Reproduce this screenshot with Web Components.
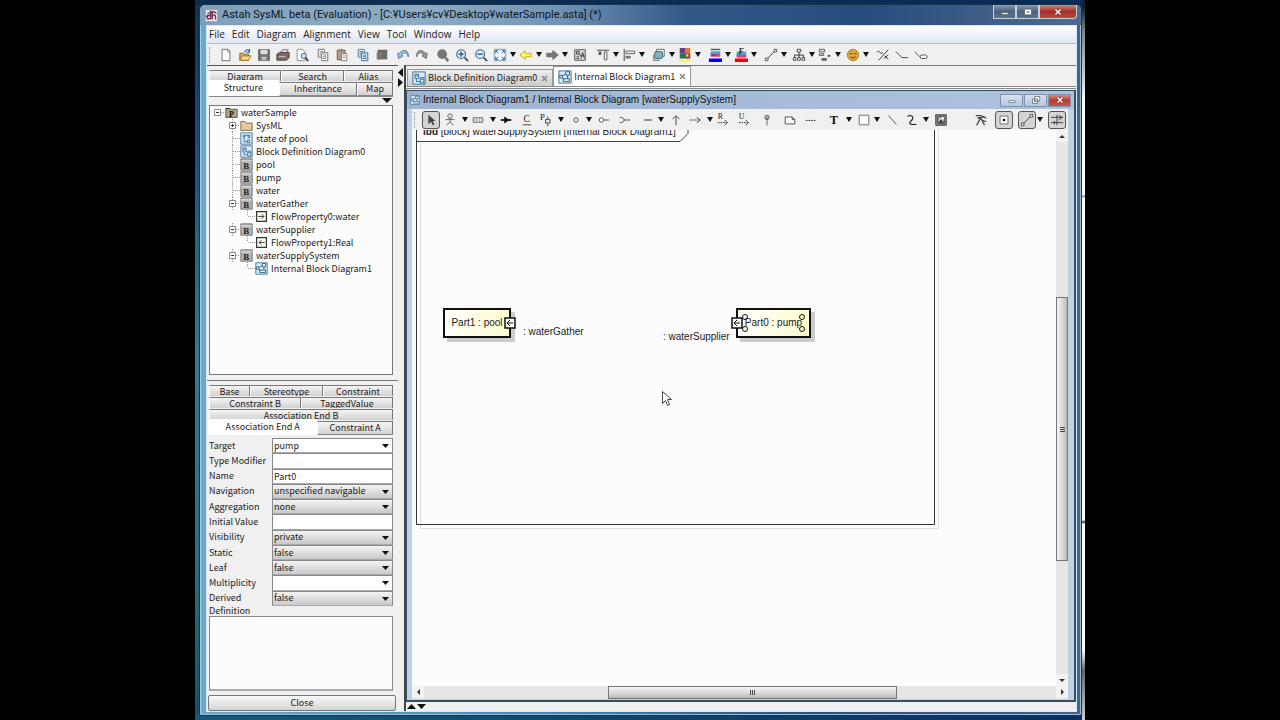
<!DOCTYPE html>
<html lang="en">
<head>
<meta charset="utf-8">
<title>Astah SysML beta</title>
<style>
  html, body {
    margin: 0;
    height: 100%;
    background: #000;
  }
  body {
    font: 9px/12px "Noto Sans CJK JP", sans-serif;
    color: #222;
  }
</style>
</head>
<body>
<astah-app></astah-app>

<script>
const ICONS = {
  logo: `<rect x="1" y="1" width="14" height="14" fill="#efe6ee"/><path d="M3 5h4v7M7 8H3v4h4M9 2v11M9 8c4-2 4 0 4 5M1 9h3M10 3l4 2M6 2l2 3" stroke="#6a2c50" stroke-width="1.6" fill="none"/>`,
  new: `<path d="M3.500 1.500h7l2 2v11h-9z" fill="#fff" stroke="#666"/><path d="M10 2v2.500h2.500" fill="none" stroke="#777"/>`,
  open: `<path d="M2 14V6h4l1 1h5v7z" fill="#d9a94a" stroke="#8a6420"/><path d="M2 14l3-5h10l-3 5z" fill="#f6d789" stroke="#94702a"/><path d="M8 5c0-3 4-4 5-1M13 1v4h-3" stroke="#3577a9" stroke-width="1.500" fill="none"/>`,
  save: `<path d="M2 2h12v12H2z" fill="#777" stroke="#444"/><path d="M4 2h8v5H4z" fill="#ddd"/><path d="M5 10h6v4H5z" fill="#bbb"/>`,
  print: `<path d="M5 6l2-4h7l-2 4z" fill="#eee" stroke="#666"/><path d="M1 7l3-2h11v6l-3 3H1z" fill="#7a6b60" stroke="#463c36"/><path d="M3 10h8" stroke="#ddd"/>`,
  preview: `<path d="M2.500 1.500h6l3 3v10h-9z" fill="#fff" stroke="#888"/><circle cx="10" cy="9" r="3" fill="#cfe1ee" stroke="#456"/><path d="M12 11l3 4" stroke="#345" stroke-width="2"/>`,
  copy: `<path d="M2.500 1.500h7v9h-7z" fill="#fff" stroke="#666"/><path d="M4 4h4M4 6h4M4 8h2" stroke="#888"/><path d="M6.500 5.500h7v9h-7z" fill="#fff" stroke="#666"/><path d="M8 8h4M8 10h4M8 12h4" stroke="#777"/>`,
  paste: `<path d="M2.500 2.500h9v11h-9z" fill="#b69b83" stroke="#6d5948"/><path d="M5 1h4v3H5z" fill="#888"/><path d="M7.500 6.500h6v8h-6z" fill="#fff" stroke="#777"/><path d="M9 9h3M9 11h3" stroke="#888"/>`,
  copyImage: `<path d="M2.500 1.500h7v9h-7z" fill="#dcebf8" stroke="#4c7597"/><path d="M4 4h4M4 6h4M4 8h2" stroke="#4c7597"/><path d="M6.500 5.500h7v9h-7z" fill="#e8f3fc" stroke="#33648d"/><path d="M8 8h4M8 10h4M8 12h4" stroke="#33648d"/>`,
  locked: `<path d="M3 2h11v11H3z" fill="#6b6b6b"/><path d="M2 5h6v8H2z" fill="#777"/>`,
  undo: `<path d="M2 6l1 6 5-3-2-1c3-4 7-3 8 2 1-7-5-10-10-4z" fill="#a9cbe1" stroke="#386789"/>`,
  redo: `<path d="M14 6l-1 6-5-3 2-1C7 4 3 5 2 10 1 3 7 0 12 6z" fill="#999" stroke="#666"/>`,
  find: `<circle cx="7" cy="7" r="5.500" fill="#777"/><path d="M10 10l4 5" stroke="#777" stroke-width="3"/>`,
  zoomIn: `<circle cx="7" cy="7" r="5" fill="#d8edfa" stroke="#3d6287" stroke-width="1.300"/><path d="M4 7h6M7 4v6" stroke="#234f7d" stroke-width="1.500"/><path d="M11 11l4 4" stroke="#3b4f66" stroke-width="2"/>`,
  zoomOut: `<circle cx="7" cy="7" r="5" fill="#d8edfa" stroke="#3d6287" stroke-width="1.300"/><path d="M4 7h6" stroke="#234f7d" stroke-width="1.500"/><path d="M11 11l4 4" stroke="#3b4f66" stroke-width="2"/>`,
  fit: `<path d="M1.500 1.500h13v13h-13z" fill="#eef7fd" stroke="#6a93b5"/><path d="M3 6V3h3M10 3h3v3M13 10v3h-3M6 13H3v-3M3 3l3 3M13 3l-3 3M3 13l3-3M13 13l-3-3" stroke="#2f6190" fill="none"/>`,
  back: `<path d="M1 8l6-5v3h7v4H7v3z" fill="#fff46b" stroke="#c5a800"/>`,
  forward: `<path d="M15 8L9 3v3H2v4h7v3z" fill="#777" stroke="#666"/>`,
  hierarchy: `<path d="M2 2h12v12H2z" fill="#ddd" stroke="#444"/><path d="M4 4h3v3H4zM4 10h3M4 12h3M9 12l2-7 2 7M9 9h4M7 8h2" stroke="#333" fill="none"/>`,
  alignTop: `<path d="M1 2.500h14" stroke="#333"/><path d="M4.500 4v4" stroke="#555" stroke-width="3"/><path d="M9.500 4.500h3v9h-3z" fill="#eee" stroke="#555"/>`,
  alignLeft: `<path d="M2.500 1v14" stroke="#333"/><path d="M4.500 3.500h10v3h-10z" fill="#eee" stroke="#555"/><path d="M4 10.500h6" stroke="#777" stroke-width="3"/>`,
  depth: `<path d="M5 1.500h9v8H5z" fill="#eef" stroke="#666"/><rect x="3" y="4" width="9" height="8" rx="2" fill="#7dafbf" stroke="#386576"/><path d="M2 8v6h7" stroke="#555" fill="none"/>`,
  palette: `<path d="M2 0h6v6H2z" fill="#69407c"/><path d="M8 0h6v6H8z" fill="#da7b3b"/><path d="M2 6h6v6H2z" fill="#29735b"/><path d="M8 6h6v6H8z" fill="#892e57"/><path d="M9 7h3v3H9z" fill="#e4ce54"/><path d="M1 13h14v3H1z" fill="#ffee6a"/>`,
  lineColor: `<path d="M3 1.500h11" stroke="#222"/><path d="M3 3h11v3H3z" fill="#55d8b0"/><path d="M3 5h11v3H3z" fill="#6388e9"/><path d="M3 7h11v3H3z" fill="#e33e79"/><path d="M4 7h5v2H4z" fill="#8a35b2"/><path d="M1 12h15v4H1z" fill="#00f"/>`,
  fontColor: `<path d="M3 4h11v3H3z" fill="#4cc595"/><path d="M3 6h11v3H3z" fill="#6388e9"/><path d="M3 8h11v3H3z" fill="#e33e79"/><text x="5" y="7" font-family="Liberation Serif" font-style="italic" font-weight="bold" font-size="9" fill="#111">F</text><path d="M1 12h15v4H1z" fill="#f00"/>`,
  link: `<path d="M4 12l8-8" stroke="#333"/><path d="M1.500 11.500h3v3h-3zM11.500 1.500h3v3h-3z" fill="#fff" stroke="#444"/>`,
  tree: `<path d="M8 5v3M3 11V8h10v3M8 8v3" stroke="#222" fill="none"/><path d="M6 1.500h4v3H6zM1.500 11h3v3h-3zM6.500 11h3v3h-3zM11.500 11h3v3h-3z" fill="#fff" stroke="#333"/>`,
  distribute: `<path d="M1.500 1.500h6v3h-6zM1.500 6.500h5v2h-5z" fill="#ddd" stroke="#555"/><path d="M4.500 12h5v2h-5z" fill="#777" stroke="#555"/><path d="M11 8h3v2h-3z" fill="#444"/>`,
  smile: `<circle cx="8" cy="8" r="6.500" fill="#e0a73c" stroke="#aa7620"/><path d="M4 7q1.500-2 3 0M9 7q1.500-2 3 0M5 10q3 3 6 0" fill="none" stroke="#563612"/>`,
  percent: `<path d="M3 14L14 2M1 5c3-4 4 4 7 0M10 9l4 4M14 8l-5 4" stroke="#222" fill="none"/>`,
  elbow: `<path d="M1 4l7 7h7" stroke="#333" fill="none"/>`,
  elbowBox: `<path d="M1 4q3 5 6 6" stroke="#555" fill="none"/><rect x="7" y="8" width="8" height="4" rx="2" fill="#fff" stroke="#444"/>`,
  select: `<path d="M5 2v11l3-3 2 4 2-1-2-4h3z" fill="#444"/>`,
  actor: `<circle cx="8" cy="3.500" r="2.500" fill="none" stroke="#555"/><path d="M8 6v4M3 7.500h10M8 10l-4 4M8 10l4 4" stroke="#555" fill="none"/>`,
  part: `<path d="M2.500 5.500h11v5h-11z" fill="#eee" stroke="#555"/><path d="M10 6v4M4 8h4" stroke="#888"/>`,
  flow: `<path d="M2 8h12" stroke="#111" stroke-width="2"/><path d="M6 4l6 4-6 4z" fill="#111"/>`,
  cLine: `<text x="4" y="10" font-family="Liberation Serif" font-size="11" fill="#222">C</text><path d="M3 13.500h10" stroke="#333"/>`,
  pPort: `<text x="1" y="8" font-family="Liberation Serif" font-size="10" fill="#222">P</text><path d="M7.500 7.500h5v4h-5zM10 4v3M10 12v3" stroke="#333" fill="none"/>`,
  circle: `<circle cx="8" cy="8" r="2.500" fill="#fff" stroke="#444"/>`,
  provided: `<circle cx="5" cy="8" r="2.500" fill="#fff" stroke="#444"/><path d="M8 8h6" stroke="#444"/>`,
  required: `<path d="M2 5q5 0 5 3t-5 3M7 8h7" stroke="#444" fill="none"/>`,
  line: `<path d="M3 8h10" stroke="#222"/>`,
  up: `<path d="M8 14V4M4 7l4-4 4 4" stroke="#333" fill="none"/>`,
  dashArrow: `<path d="M2 8h10" stroke="#222" stroke-dasharray="2 1"/><path d="M10 5l4 3-4 3" stroke="#222" fill="none"/>`,
  rArrow: `<text x="2" y="7" font-family="Liberation Serif" font-size="9" fill="#222">R</text><path d="M2 11h10" stroke="#222" stroke-dasharray="2 1"/><path d="M10 8l3 3-3 3" stroke="#222" fill="none"/>`,
  uArrow: `<text x="2" y="7" font-family="Liberation Serif" font-size="9" fill="#222">U</text><path d="M2 11h10" stroke="#222" stroke-dasharray="2 1"/><path d="M10 8l3 3-3 3" stroke="#222" fill="none"/>`,
  pin: `<circle cx="8" cy="5" r="2.500" fill="#bbb" stroke="#555"/><path d="M8 5v9" stroke="#555"/>`,
  note: `<path d="M2.500 4.500h8l3 3v5h-11z" fill="#fff" stroke="#444"/><path d="M10.500 4.500v3h3" stroke="#444" fill="none"/>`,
  dots: `<path d="M2 8.500h12" stroke="#222" stroke-dasharray="2 1"/>`,
  text: `<text x="3" y="13" font-family="Liberation Serif" font-weight="bold" font-size="14" fill="#111">T</text>`,
  square: `<path d="M2.500 2.500h11v11h-11z" fill="#fff" stroke="#666"/>`,
  diagonal: `<path d="M4 3l9 10" stroke="#444"/>`,
  curve: `<path d="M4 4c4-3 8 1 5 4s-5 6 5 5" stroke="#222" stroke-width="1.300" fill="none"/>`,
  image: `<path d="M2 2h12v12H2z" fill="#888" stroke="#333"/><path d="M4.500 4.500h7v7h-7z" fill="#ccc" stroke="#333"/><path d="M5 11l3-4 3 4z" fill="#333"/><circle cx="10" cy="6" r="1.500" fill="#fff"/>`,
  pointer: `<path d="M2 3h6l6 3M4 6l8-2M8 5l-5 9M9 8l5 2M8 6l4 8" stroke="#444" stroke-width="1.500" fill="none"/>`,
  center: `<path d="M3.500 3.500h9v9h-9z" fill="#fff" stroke="#666"/><circle cx="8" cy="8" r="1.500" fill="#111"/>`,
  guides: `<path d="M1 5h14M1 11h14M8 2v12M10 3l4 2-4 3M5 9v4" stroke="#333" fill="none"/>`,
  project: `<path d="M1 3h5l1 1h8v10H1z" fill="#aaa889" stroke="#444"/><path d="M1 3h5" stroke="#222"/><text x="5" y="13" font-family="Liberation Serif" font-weight="bold" font-size="10" fill="#111">P</text>`,
  folder: `<path d="M1 3h5l2 2h7v9H1z" fill="#e3ca99" stroke="#735f38"/>`,
  state: `<path d="M1 1h14v14H1z" fill="#d7ecfa" stroke="#38658a"/><path d="M4 4h2v2H4zM10 4h2v3h-2zM9 10h3v3H9zM5 6v6h4M6 4h4" stroke="#28618e" fill="none"/>`,
  bdd: `<path d="M1 1h14v14H1z" fill="#d7ecfa" stroke="#38658a"/><path d="M3.500 3.500h4v5h-4zM9.500 7.500h4v6h-4zM4 5.500h3M10 9.500h3M5 9v3h4" stroke="#28618e" fill="none"/>`,
  ibd: `<path d="M1 1h14v14H1z" fill="#d7ecfa" stroke="#38658a"/><path d="M2 6h3v3H2zM9 2h4v4H9zM6 10h7v3H6zM5 7l4-3M5 9l2 2M11 6v4" stroke="#184f7c" fill="#fff"/>`,
  block: `<path d="M1 1h14v14H1z" fill="#b4b4b4" stroke="#666"/><path d="M1 3.500h14" stroke="#eee"/><text x="4" y="13" font-family="Liberation Serif" font-weight="bold" font-size="11" fill="#222">B</text>`,
  flowOut: `<path d="M2 2h12v12H2z" fill="#fffff0" stroke="#333" stroke-width="1.500"/><path d="M4 8h7M8 5l3 3-3 3" stroke="#222" fill="none"/>`,
  flowIn: `<path d="M2 2h12v12H2z" fill="#fffff0" stroke="#333" stroke-width="1.500"/><path d="M5 8h7M8 5L5 8l3 3" stroke="#222" fill="none"/>`,
  min: `<path d="M3 9h10v3H3z" fill="#fff" stroke="#555"/>`,
  max: `<path d="M2.500 3.500h11v9h-11z" fill="#fff" stroke="#555"/><path d="M6 7h4v2H6z" fill="#566"/>`,
  restore: `<path d="M6 2.500h8v7H6zM2.500 6.500h8v7h-8z" fill="#fff" stroke="#445"/><path d="M5 9h3v2H5z" fill="#667"/>`,
  close: `<path d="M4 4l8 8M12 4l-8 8" stroke="#622" stroke-width="4"/><path d="M4 4l8 8M12 4l-8 8" stroke="#fff" stroke-width="2.500"/>`,
};

// Base class: every element fills its own open shadow root once
class AstahElement extends HTMLElement {
  connectedCallback() {
    if (this.shadowRoot) return;
    const template = document.createElement("template");
    template.innerHTML = this.render();
    this.attachShadow({ mode: "open" }).appendChild(template.content.cloneNode(true));
  }
  attr(name) {
    return this.getAttribute(name) || "";
  }
}

class AstahIcon extends AstahElement {
  render() {
    return `
      <style>
        :host { display: block; flex: none; width: 14px; height: 14px; }
        svg { display: block; width: 100%; height: 100%; }
      </style>
      <svg viewBox="0 0 16 16" aria-hidden="true">${ICONS[this.attr("name")]}</svg>
    `;
  }
}
customElements.define("astah-icon", AstahIcon);

class ToolButton extends AstahElement {
  render() {
    return `
      <style>
        :host { display: block; flex: none; }
        button {
          display: grid; place-items: center; box-sizing: border-box;
          width: 18px; height: 18px; padding: 0;
          border: 1px solid transparent; border-radius: 3px; background: none;
        }
        :host([pressed]) button { border-color: #555; background: #d4d4d4; }
      </style>
      <button type="button" aria-label="${this.attr("icon")}"><astah-icon name="${this.attr("icon")}"></astah-icon></button>
    `;
  }
}
customElements.define("tool-button", ToolButton);

class ToolArrow extends AstahElement {
  render() {
    return `
      <style>
        :host { display: block; flex: none; }
        button { display: block; width: 6px; height: 18px; padding: 0; border: 0; background: none; }
        svg { display: block; }
      </style>
      <button type="button" aria-label="more"><svg width="6" height="18"><path d="M0 6h6l-3 5z" fill="#111"/></svg></button>
    `;
  }
}
customElements.define("tool-arrow", ToolArrow);

// items: icon names, "v" drop-down arrow, "." and ":" narrow and wide gaps,
// ">" pushes the rest to the right, "*" before a name marks it pressed
class ToolStrip extends AstahElement {
  render() {
    const parts = this.attr("items").split(" ").map((item) => {
      if (item === "v") return "<tool-arrow></tool-arrow>";
      if (item === ".") return '<i class="narrow"></i>';
      if (item === ":") return '<i class="wide"></i>';
      if (item === ">") return '<i class="push"></i>';
      if (item[0] === "*") return `<tool-button pressed icon="${item.slice(1)}"></tool-button>`;
      return `<tool-button icon="${item}"></tool-button>`;
    });
    return `
      <style>
        :host { display: flex; align-items: center; gap: 1px; background: #f0f0f0; overflow: hidden; }
        .grip { width: 2px; height: 16px; margin: 0 4px 0 2px; border-left: 1px dotted #999; }
        .narrow { width: 1px; }
        .wide { width: 3px; }
        .push { flex: 1; }
      </style>
      <i class="grip"></i>
      ${parts.join("")}
    `;
  }
}
customElements.define("tool-strip", ToolStrip);

class CaptionButtons extends AstahElement {
  render() {
    return `
      <style>
        :host { display: flex; align-items: stretch; height: 14px; }
        button {
          display: grid; place-items: center; padding: 0; width: 23px; box-sizing: border-box;
          border: 1px solid #c5d0dc; border-top: 0;
          background: linear-gradient(#8c9cb0, #4c617d 50%, #5d728d);
        }
        button:first-child { border-bottom-left-radius: 4px; }
        .close {
          width: 38px; border-bottom-right-radius: 4px;
          background: linear-gradient(#c98a80, #a53127 50%, #b84c3c);
        }
        astah-icon { width: 10px; height: 10px; }
        :host([inner]) { height: 13px; gap: 1px; }
        :host([inner]) button { width: 23px; border: 1px solid #8292ab; background: linear-gradient(#d5e2f1, #b3c6de); border-radius: 0; }
        :host([inner]) .close { background: linear-gradient(#d98d83, #b73a30 50%, #c6584b); }
      </style>
      <button type="button" aria-label="Minimize"><astah-icon name="min"></astah-icon></button>
      <button type="button" aria-label="Maximize"><astah-icon name="${this.hasAttribute("inner") ? "restore" : "max"}"></astah-icon></button>
      <button type="button" aria-label="Close window" class="close"><astah-icon name="close"></astah-icon></button>
    `;
  }
}
customElements.define("caption-buttons", CaptionButtons);

class MenuBar extends AstahElement {
  render() {
    const items = ["File", "Edit", "Diagram", "Alignment", "View", "Tool", "Window", "Help"];
    return `
      <style>
        :host {
          display: flex; align-items: flex-start; gap: 7px; height: 17px; padding: 0 2px;
          background: linear-gradient(#fff, #dfe5f2); border-bottom: 1px solid #b5bac6;
          font: 10px/16px "Open Sans", sans-serif;
        }
        a { color: #222; text-decoration: none; }
      </style>
      ${items.map((item) => `<a href="#">${item}</a>`).join("")}
    `;
  }
}
customElements.define("menu-bar", MenuBar);

class PanelTab extends AstahElement {
  render() {
    return `
      <style>
        :host { display: block; min-width: 0; height: 11px; }
        button {
          display: block; width: 100%; height: 100%; padding: 0; box-sizing: border-box; overflow: hidden;
          border: 1px solid #777; border-bottom: 0; border-left-color: #fff;
          background: linear-gradient(#f4f4f4, #d2d2d2);
          font: inherit; line-height: 12px; color: inherit; white-space: nowrap;
        }
        :host([front]) { height: 14px; align-self: end; }
        :host([front]) button { border-bottom: 1px solid #888; }
        :host([active]) { height: 16px; }
        :host([active]) button { border-color: #fff; background: #fff; }
      </style>
      <button type="button"><slot></slot></button>
    `;
  }
}
customElements.define("panel-tab", PanelTab);

class TreeItem extends AstahElement {
  render() {
    const level = Number(this.attr("level"));
    const toggle = this.attr("toggle");
    const box = toggle
      ? `<path d="M3.500 3.500h6v6h-6z" fill="#fff" stroke="#888"/><path d="M5 6.500h3${toggle === "+" ? "M6.500 5v3" : ""}" stroke="#333"/><path d="M10 6.500h4" stroke="#999" stroke-dasharray="1 1"/>`
      : `<path d="M6.500 0v${this.hasAttribute("last") ? 6 : 13}M7 6.500h7" stroke="#999" stroke-dasharray="1 1" fill="none"/>`;
    const trunk = toggle && level ? '<path d="M6.500 0v3M6.500 10v3" stroke="#999" stroke-dasharray="1 1"/>' : "";
    return `
      <style>
        :host { display: flex; align-items: center; height: 13px; white-space: nowrap; padding-left: ${level * 15}px; }
        svg { flex: none; }
        astah-icon { width: 13px; height: 13px; margin-right: 3px; }
      </style>
      <svg width="14" height="13">${trunk}${box}</svg>
      <astah-icon name="${this.attr("icon")}"></astah-icon>
      <slot></slot>
    `;
  }
}
customElements.define("tree-item", TreeItem);

class PropertyRow extends AstahElement {
  render() {
    const value = this.attr("value");
    const field = this.attr("kind") === "text"
      ? `<input id="field" type="text" value="${value}">`
      : `<select id="field" class="${this.attr("kind")}"><option>${value}</option></select>`;
    return `
      <style>
        :host { display: grid; grid-template-columns: 63px 1fr; align-items: stretch; min-height: 0; }
        label { align-self: center; line-height: 12px; white-space: nowrap; }
        input, select {
          width: 100%; min-width: 0; height: 100%; box-sizing: border-box; margin: 0; padding: 0 1px;
          border: 1px solid #888; border-bottom-color: #aaa; border-radius: 0;
          font: inherit; line-height: 12px; color: #222; background: #fff; appearance: none;
        }
        select { background: linear-gradient(#f4f4f4, #c9c9c9); }
        select.combo { background: #fff; }
        .field { position: relative; min-height: 0; }
        svg { position: absolute; right: 4px; top: 6px; pointer-events: none; }
      </style>
      <label for="field">${this.attr("label")}</label>
      <div class="field">
        ${field}
        ${this.attr("kind") === "text" ? "" : '<svg width="7" height="4"><path d="M0 0h7l-3.500 4z" fill="#111"/></svg>'}
      </div>
    `;
  }
}
customElements.define("property-row", PropertyRow);

class StructurePanel extends AstahElement {
  render() {
    return `
      <style>
        :host { display: flex; flex-direction: column; height: 314px; padding: 4px 5px 0 1px; border-top: 1px solid #555; box-sizing: border-box; }
        .row { display: grid; }
        .row.back { grid-template-columns: 72fr 63fr 49fr; margin-left: 1px; height: 10px; }
        .row.front { grid-template-columns: 71fr 79fr 36fr; position: relative; }
        .bar { display: flex; justify-content: flex-end; height: 8px; border-top: 1px solid #888; margin: 0 0 0 1px; }
        .tree { flex: 1; border: 1px solid #777; margin: 0 0 4px 1px; background: #fdfcfd; overflow: hidden; }
        tree-item { margin-left: 1px; }
      </style>
      <div class="row back">
        <panel-tab>Diagram</panel-tab><panel-tab>Search</panel-tab><panel-tab>Alias</panel-tab>
      </div>
      <div class="row front">
        <panel-tab front active>Structure</panel-tab><panel-tab front>Inheritance</panel-tab><panel-tab front>Map</panel-tab>
      </div>
      <div class="bar"><svg width="12" height="7"><path d="M1 1h10l-5 5z" fill="#111"/></svg></div>
      <div class="tree">
        <tree-item level="0" toggle="-" icon="project">waterSample</tree-item>
        <tree-item level="1" toggle="+" icon="folder">SysML</tree-item>
        <tree-item level="1" icon="state">state of pool</tree-item>
        <tree-item level="1" icon="bdd">Block Definition Diagram0</tree-item>
        <tree-item level="1" icon="block">pool</tree-item>
        <tree-item level="1" icon="block">pump</tree-item>
        <tree-item level="1" icon="block">water</tree-item>
        <tree-item level="1" toggle="-" icon="block">waterGather</tree-item>
        <tree-item level="2" last icon="flowOut">FlowProperty0:water</tree-item>
        <tree-item level="1" toggle="-" icon="block">waterSupplier</tree-item>
        <tree-item level="2" last icon="flowIn">FlowProperty1:Real</tree-item>
        <tree-item level="1" toggle="-" icon="block">waterSupplySystem</tree-item>
        <tree-item level="2" last icon="ibd">Internal Block Diagram1</tree-item>
      </div>
    `;
  }
}
customElements.define("structure-panel", StructurePanel);

class PropertyPanel extends AstahElement {
  render() {
    return `
      <style>
        :host { display: flex; flex-direction: column; flex: 1; min-height: 0; margin-top: 1px; padding: 4px 5px 0 1px; border-top: 1px solid #777; }
        .row { display: grid; height: 12px; margin-left: 1px; }
        .base { grid-template-columns: 41fr 73fr 70fr; }
        .half { grid-template-columns: 1fr 1fr; }
        .row.end { height: 10px; }
        .front { grid-template-columns: 110fr 76fr; height: 16px; margin-left: 0; }
        .fields { display: grid; grid-auto-rows: 1fr; height: 168px; margin: 3px 0 0 1px; }
        label { margin: 0 0 0 1px; line-height: 10px; }
        textarea { flex: 1; min-height: 0; margin: 0 0 0 1px; box-sizing: border-box; border: 1px solid #888; border-bottom: 2px solid #aaa; background: #fdfcfd; resize: none; }
        .close {
          flex: none; height: 16px; margin: 4px -3px 0 0; padding: 0;
          border: 1px solid #777; border-radius: 2px; background: linear-gradient(#f8f8f8, #d4d4d4);
          font: inherit; line-height: 12px; color: inherit;
        }
      </style>
      <div class="row base"><panel-tab>Base</panel-tab><panel-tab>Stereotype</panel-tab><panel-tab>Constraint</panel-tab></div>
      <div class="row half"><panel-tab>Constraint B</panel-tab><panel-tab>TaggedValue</panel-tab></div>
      <div class="row end"><panel-tab>Association End B</panel-tab></div>
      <div class="row front"><panel-tab front active>Association End A</panel-tab><panel-tab front>Constraint A</panel-tab></div>
      <div class="fields">
        <property-row label="Target" kind="combo" value="pump"></property-row>
        <property-row label="Type Modifier" kind="text"></property-row>
        <property-row label="Name" kind="text" value="Part0"></property-row>
        <property-row label="Navigation" kind="list" value="unspecified navigable"></property-row>
        <property-row label="Aggregation" kind="list" value="none"></property-row>
        <property-row label="Initial Value" kind="text"></property-row>
        <property-row label="Visibility" kind="list" value="private"></property-row>
        <property-row label="Static" kind="list" value="false"></property-row>
        <property-row label="Leaf" kind="list" value="false"></property-row>
        <property-row label="Multiplicity" kind="combo"></property-row>
        <property-row label="Derived" kind="list" value="false"></property-row>
      </div>
      <label for="definition">Definition</label>
      <textarea id="definition"></textarea>
      <button type="button" class="close">Close</button>
    `;
  }
}
customElements.define("property-panel", PropertyPanel);

class EditorTab extends AstahElement {
  render() {
    return `
      <style>
        :host {
          display: flex; align-items: center; gap: 2px; height: 16px; padding: 0 4px; white-space: nowrap;
          border: 1px solid #999; border-bottom: 0; background: linear-gradient(#eee, #ccc);
        }
        :host([active]) { height: 19px; background: #fff; }
        button { display: grid; padding: 0; border: 0; background: none; margin-left: 2px; }
      </style>
      <astah-icon name="${this.attr("icon")}"></astah-icon>
      <slot></slot>
      <button type="button" aria-label="Close tab"><svg width="7" height="7"><path d="M1 1l5 5M6 1l-5 5" stroke="#888" stroke-width="1.500"/></svg></button>
    `;
  }
}
customElements.define("editor-tab", EditorTab);

// before / size / after are the shares of the track around the thumb
class ScrollTrack extends AstahElement {
  render() {
    const vertical = this.hasAttribute("vertical");
    return `
      <style>
        :host { display: flex; flex-direction: ${vertical ? "column" : "row"}; background: #e6e6e6; }
        svg { flex: none; background: #f2f2f2; }
        .thumb {
          display: grid; place-items: center; flex: ${this.attr("size")}; border: 1px solid #777;
          background: linear-gradient(${vertical ? "90deg" : "180deg"}, #f4f4f4, #dcdcdc 50%, #b8b8b8);
        }
        .grip {
          width: 5px; height: 5px;
          background: repeating-linear-gradient(${vertical ? "180deg" : "90deg"}, #444 0 1px, transparent 1px 2px);
        }
        .before { flex: ${this.attr("before")}; }
        .after { flex: ${this.attr("after")}; }
      </style>
      <svg width="12" height="12"><path d="${vertical ? "M3 8h6l-3-3z" : "M8 3v6l-3-3z"}" fill="#333"/></svg>
      <i class="before"></i>
      <div class="thumb"><i class="grip"></i></div>
      <i class="after"></i>
      <svg width="12" height="12"><path d="${vertical ? "M3 5h6l-3 3z" : "M5 3v6l3-3z"}" fill="#333"/></svg>
    `;
  }
}
customElements.define("scroll-track", ScrollTrack);

class BlockPart extends AstahElement {
  render() {
    return `
      <style>
        :host {
          position: absolute; display: grid; place-items: center; box-sizing: border-box; height: 30px;
          border: 2px solid #111; background: linear-gradient(90deg, #fffffa, #fffbd0);
          box-shadow: 4px 4px 0 #ccc; line-height: 14px; white-space: nowrap;
        }
        .port { position: absolute; top: 7px; width: 12px; height: 12px; }
        :host([port="right"]) .port { right: -7px; }
        :host([port="left"]) .port { left: -7px; }
        .handles { position: absolute; inset: 4px 2px 4px 4px; }
        .handles i { position: absolute; width: 4px; height: 4px; border: 1px solid #111; border-radius: 50%; }
        .handles i:nth-child(odd) { left: 0; }
        .handles i:nth-child(even) { right: 2px; }
        .handles i:nth-child(n+3) { bottom: 0; }
      </style>
      <slot></slot>
      <svg class="port" viewBox="0 0 12 12"><path d="M1 1h10v10H1z" fill="#fff" stroke="#111" stroke-width="1.500"/><path d="M3 6h6M6 3L3 6l3 3" stroke="#111" fill="none"/></svg>
      ${this.hasAttribute("selected") ? '<div class="handles"><i></i><i></i><i></i><i></i></div>' : ""}
    `;
  }
}
customElements.define("block-part", BlockPart);

class DiagramCanvas extends AstahElement {
  render() {
    return `
      <style>
        :host { display: block; position: relative; overflow: hidden; background: #fdfcfd; font: 10px/12px "Liberation Sans", sans-serif; color: #222; }
        .frame, .title, .name { position: absolute; white-space: nowrap; }
        .frame { left: 4px; top: 0; }
        .title { left: 11px; top: -4px; }
        .cursor { position: absolute; left: 249px; top: 260px; }
      </style>
      <svg class="frame" width="524" height="400" fill="none">
        <path d="M4.500 12v386.500h518V0" stroke="#ddd"/>
        <path d="M.5 0v394.500h518V0" stroke="#333"/>
        <path d="M1 11.500h263l8-8V0" stroke="#444"/>
      </svg>
      <div class="title"><b>ibd</b> [block] waterSupplySystem [Internal Block Diagram1]</div>
      <block-part port="right" style="left: 31px; top: 178px; width: 68px">Part1 : pool</block-part>
      <span class="name" style="left: 111px; top: 196px">: waterGather</span>
      <span class="name" style="left: 251px; top: 201px">: waterSupplier</span>
      <block-part port="left" selected style="left: 324px; top: 178px; width: 75px">Part0 : pump</block-part>
      <svg class="cursor" width="12" height="18"><path d="M1.500 1.500v12l3-3 2 5 2-1-2-5h4z" fill="#fff" stroke="#444"/></svg>
    `;
  }
}
customElements.define("diagram-canvas", DiagramCanvas);

class DiagramFrame extends AstahElement {
  render() {
    return `
      <style>
        :host {
          display: grid; grid-template: 18px 21px 1fr 13px / 1fr 12px; min-height: 0;
          padding: 0 6px 1px 5px; border: 1px solid #344f60; border-width: 1px 2px 2px 1px; background: #bfd1e8;
        }
        header {
          grid-column: 1 / 3; display: flex; align-items: center; gap: 3px; color: #111;
          margin: 0 -6px 0 -5px; padding: 0 3px; background: linear-gradient(90deg, #9fb4d0, #adc2df);
          font: 10px/14px "Liberation Sans", sans-serif; white-space: nowrap;
        }
        header astah-icon { width: 10px; height: 10px; }
        header span { flex: 1; }
        tool-strip, .bottom { grid-column: 1 / 3; }
      </style>
      <header>
        <astah-icon name="ibd"></astah-icon>
        <span>Internal Block Diagram1 / Internal Block Diagram [waterSupplySystem]</span>
        <caption-buttons inner></caption-buttons>
      </header>
      <tool-strip items="*select actor . v part . v flow . cLine pPort . v . circle v . provided . required : line v . up dashArrow . v rArrow . uArrow : pin : note . dots : text . v . square v . diagonal curve . v . image > pointer : *center : *link v : *guides ."></tool-strip>
      <diagram-canvas></diagram-canvas>
      <scroll-track vertical before="155" size="262" after="113"></scroll-track>
      <scroll-track class="bottom" before="185" size="287" after="160"></scroll-track>
    `;
  }
}
customElements.define("diagram-frame", DiagramFrame);

class AstahWindow extends AstahElement {
  render() {
    return `
      <style>
        :host {
          display: flex; flex-direction: column; box-sizing: border-box; height: 100%; padding: 0 4px 3px 6px;
          border: 1px solid #17344e; border-radius: 6px 6px 2px 2px;
          background: linear-gradient(90deg, #6ba9c8, #4289b3 40%, #28527e 70%, #3f648d);
          box-shadow: inset 1px 1px 0 #a9c9df, inset -1px -1px 0 #9bbbd5;
        }
        .title {
          display: flex; gap: 4px; height: 20px; margin: 0 -4px 0 -6px; padding: 0 4px 0 5px;
          border-radius: 6px 6px 0 0; color: #0b1722; white-space: nowrap;
          background: linear-gradient(90deg, #7e9fb9, #8facc4 25%, #7396b6 40%, #315a88 55%, #254c7e 75%, #4f6c8d);
          font: 11px/20px Roboto, sans-serif;
        }
        .title span { flex: 1; }
        .title astah-icon { width: 13px; height: 13px; align-self: center; }
        .client { display: flex; flex-direction: column; flex: 1; min-height: 0; border: 1px solid #dbe7f1; background: #f0f0f0; }
        .work { display: grid; grid-template-columns: 191px 6px 1fr; flex: 1; min-height: 0; }
        .side { display: flex; flex-direction: column; min-height: 0; }
        .split { padding-top: 3px; }
        .split svg, .foot svg { display: block; }
        .main { display: grid; grid-template-rows: 20px 4px 1fr 9px; min-width: 0; min-height: 0; border-left: 2px solid #444; border-top: 1px solid #777; }
        .tabs { display: flex; align-items: flex-end; padding-left: 1px; }
        .rule { border: 1px solid #888; border-width: 1px 0; background: #fff; margin-bottom: 1px; }
        .foot { padding: 2px 0 0 1px; }
        tool-strip { height: 21px; }
      </style>
      <div class="title">
        <astah-icon name="logo"></astah-icon>
        <span>Astah SysML beta (Evaluation) - [C:¥Users¥cv¥Desktop¥waterSample.asta] (*)</span>
        <caption-buttons></caption-buttons>
      </div>
      <div class="client">
        <menu-bar></menu-bar>
        <tool-strip items="new open save print preview . copy paste . copyImage locked . undo redo . find zoomIn zoomOut fit v back v forward v . hierarchy : alignTop v alignLeft v : depth v palette v : lineColor v fontColor v : link v . tree v distribute v . smile v : percent elbow elbowBox"></tool-strip>
        <div class="work">
          <div class="side">
            <structure-panel></structure-panel>
            <property-panel></property-panel>
          </div>
          <div class="split"><svg width="6" height="20"><path d="M5 0v9l-5-4.500zM0 10v9l5-4.500z" fill="#111"/></svg></div>
          <div class="main">
            <div class="tabs">
              <editor-tab icon="bdd">Block Definition Diagram0</editor-tab>
              <editor-tab icon="ibd" active>Internal Block Diagram1</editor-tab>
            </div>
            <div class="rule"></div>
            <diagram-frame></diagram-frame>
            <div class="foot"><svg width="20" height="6"><path d="M0 5h9l-4.500-5zM10 0h9l-4.500 5z" fill="#111"/></svg></div>
          </div>
        </div>
      </div>
    `;
  }
}
customElements.define("astah-window", AstahWindow);

class AstahApp extends AstahElement {
  render() {
    return `
      <style>
        :host { display: grid; grid-template-columns: 195px 1fr 195px; height: 100vh; background: #000; }
        .desktop {
          grid-column: 2; min-width: 0; min-height: 0; box-sizing: border-box; padding: 4px 3px 4px 4px;
          background:
            linear-gradient(#123 0 8px, #79837f 30px, #e6e6e6 90px, #fff 100px, #fff 195px, #777 196px, #fff 198px, #fff 520px, #333 522px, #fff 524px, #fff 650px, #666 670px, #ccc) right / 3px 100% no-repeat,
            linear-gradient(90deg, #0c2c4e, #0b2b58) top / 100% 6px no-repeat,
            linear-gradient(90deg, #155a78, #0b2f5e) bottom / 100% 6px no-repeat,
            linear-gradient(#0d3157, #1b4f78 20%, #2e7d92 50%, #256e83 80%, #155068);
        }
      </style>
      <div class="desktop"><astah-window></astah-window></div>
    `;
  }
}
customElements.define("astah-app", AstahApp);
</script>
</body>
</html>
